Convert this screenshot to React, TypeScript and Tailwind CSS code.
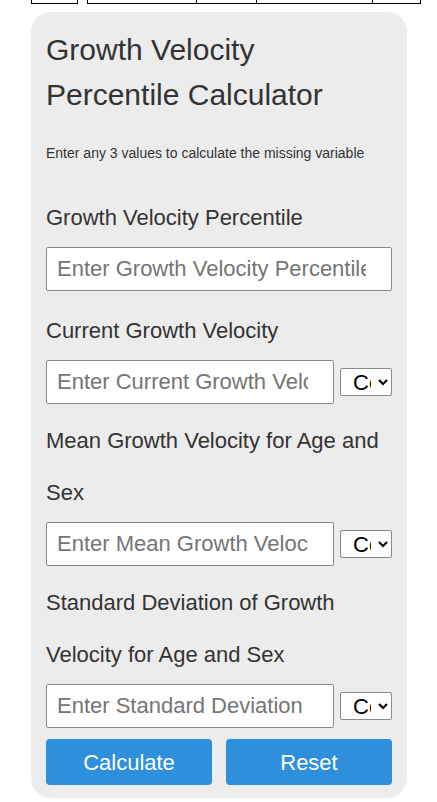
import { useState } from 'react'

const fields = [
  { label: 'Growth Velocity Percentile', placeholder: 'Enter Growth Velocity Percentile', unit: false },
  { label: 'Current Growth Velocity', placeholder: 'Enter Current Growth Velocity', unit: true },
  { label: 'Mean Growth Velocity for Age and Sex', placeholder: 'Enter Mean Growth Velocity', unit: true },
  { label: 'Standard Deviation of Growth Velocity for Age and Sex', placeholder: 'Enter Standard Deviation of Growth Velocity', unit: true },
]

export default function App() {
  const [values, setValues] = useState<string[]>(['', '', '', ''])

  const update = (i: number, v: string) => {
    const next = [...values]
    next[i] = v
    setValues(next)
  }

  return (
    <div className="min-h-screen bg-white font-['Liberation_Sans',Arial,sans-serif] text-[#333]">
      {/* cut-off nav row at the very top */}
      <div className="flex h-[4px] pl-[31px]">
        <div className="w-[47px] border-x border-b border-black" />
        <div className="ml-[9px] flex">
          <div className="w-[110px] border-x border-b border-black" />
          <div className="w-[60px] border-r border-b border-black" />
          <div className="w-[116px] border-r border-b border-black" />
          <div className="w-[48px] border-r border-b border-black" />
        </div>
      </div>

      <div className="ml-[31px] mt-[8px] w-[376px] rounded-[20px] bg-[#ececec] px-[15px] pt-[15px] pb-[13px]">
        <h1 className="text-[30px] leading-[45px] font-normal">Growth Velocity Percentile Calculator</h1>
        <p className="mt-[28px] text-[14px] leading-[16px]">Enter any 3 values to calculate the missing variable</p>

        <div className="mt-[31px]">
          {fields.map((f, i) => (
            <div key={f.label} className={i === 0 ? '' : i === 1 ? 'mt-[14px]' : 'mt-[11px]'}>
              <label className="block text-[22px] leading-[52px]">{f.label}</label>
              <div className="mt-[3px] flex items-center gap-[6px]">
                <input
                  type="number"
                  value={values[i]}
                  onChange={e => update(i, e.target.value)}
                  placeholder={f.placeholder}
                  className="h-[44px] min-w-0 flex-1 rounded-[2px] border border-[#8a8a8a] bg-white px-[10px] text-[22px] placeholder:text-[#757575] outline-none"
                />
                {f.unit && (
                  <select className="h-[28px] w-[52px] shrink-0 rounded-[2px] border border-[#8a8a8a] bg-white pl-[8px] pr-[4px] text-[22px] text-black">
                    <option>Centimeters per year</option>
                    <option>Inches per year</option>
                  </select>
                )}
              </div>
            </div>
          ))}
        </div>

        <div className="mt-[11px] grid grid-cols-2 gap-[14px]">
          <button className="h-[46px] rounded-[4px] bg-[#2e90dc] text-[22px] text-white">Calculate</button>
          <button
            onClick={() => setValues(['', '', '', ''])}
            className="h-[46px] rounded-[4px] bg-[#2e90dc] text-[22px] text-white"
          >
            Reset
          </button>
        </div>
      </div>
    </div>
  )
}
